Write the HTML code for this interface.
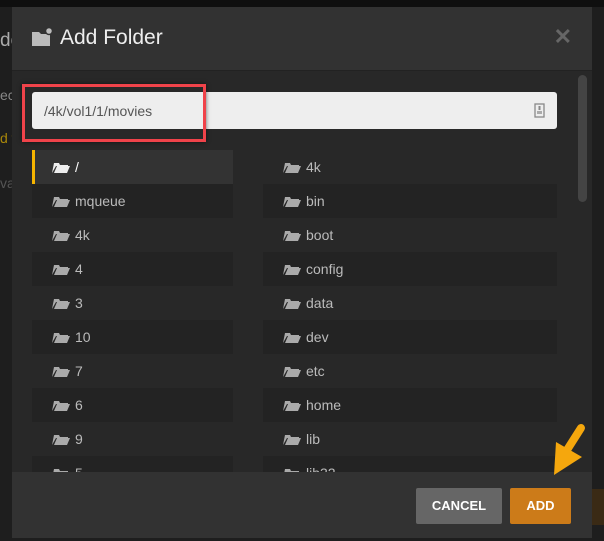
<!DOCTYPE html>
<html><head><meta charset="utf-8"><style>
*{box-sizing:border-box;margin:0;padding:0}
body{width:604px;height:541px;background:#1e1e1e;font-family:"Liberation Sans",sans-serif;position:relative;overflow:hidden}
.top{position:absolute;left:0;top:0;width:604px;height:7px;background:#0f0f0f}
.bgt{position:absolute;color:#888;font-size:15px}
.modal{position:absolute;left:12px;top:7px;width:580px;height:531px;background:#282828;overflow:hidden}
.hdr{position:absolute;left:0;top:0;width:580px;height:64px;background:#323232;border-bottom:1px solid #222}
.hdr h1{position:absolute;left:48px;top:19px;font-size:21px;font-weight:normal;color:#eee}
.close{position:absolute;right:20px;top:17px;color:#666;font-size:22px;font-weight:bold}
.inp{position:absolute;left:20px;top:85px;width:525px;height:37px;background:#eee;border-radius:3px;color:#555;font-size:14px;padding:11px 12px}
.red{position:absolute;left:10px;top:77px;width:184px;height:58px;border:3px solid #f0434a;box-shadow:0 0 4px rgba(0,0,0,.6)}
.row{position:absolute;height:34px;font-size:14px;color:#bbb;padding:9px 0 0 43px}
.row svg{position:absolute;left:19px;top:11px}
.sb{position:absolute;left:566px;top:68px;width:9px;height:127px;background:#444;border-radius:5px}
.ftr{position:absolute;left:0;top:465px;width:580px;height:66px;background:#323232}
.btn{position:absolute;top:16px;height:36px;color:#fff;font-weight:bold;font-size:13px;text-align:center;line-height:36px;border-radius:2px}
</style></head><body>
<div class="top"></div>
<div class="bgt" style="left:0;top:30px;font-size:19px;color:#aaa">de</div>
<div class="bgt" style="left:0;top:87px;font-size:14px">ec</div>
<div class="bgt" style="left:0;top:130px;font-size:14px;color:#a8870a">d f</div>
<div class="bgt" style="left:0;top:175px;font-size:14px;color:#555">va</div>
<div style="position:absolute;left:592px;top:489px;width:12px;height:36px;background:#3a2a15"></div>
<div class="modal">
<div class="hdr">
<svg style="position:absolute;left:20px;top:20px" width="22" height="20" viewBox="0 0 22 20"><path d="M0 5h7l2 2h9v12H0z" fill="#bbb"/><circle cx="17" cy="4" r="3.5" fill="#bbb" stroke="#323232" stroke-width="1.5"/></svg>
<h1>Add Folder</h1><div class="close">✕</div></div>
<div class="inp">/4k/vol1/1/movies
<svg style="position:absolute;right:12px;top:11px" width="11" height="15" viewBox="0 0 11 15"><rect x="1" y="1" width="9" height="13" fill="none" stroke="#888" stroke-width="1.3"/><rect x="4.5" y="3" width="2" height="4" fill="#888"/><rect x="3" y="8" width="5" height="3" fill="#aaa"/></svg></div>
<div class="red"></div>
<div class="sb"></div>
<div id="rows"></div>
<div class="ftr">
<div class="btn" style="left:404px;width:86px;background:#666">CANCEL</div>
<div class="btn" style="left:498px;width:61px;background:#cc7b19">ADD</div>
</div>
</div>
<svg style="position:absolute;left:0;top:0" width="604" height="541" viewBox="0 0 604 541"><line x1="581" y1="428" x2="567" y2="450" stroke="#f5a70d" stroke-width="8" stroke-linecap="round"/><path d="M556 442 L582 457 L554 475 Z" fill="#f5a70d"/></svg>
<script>
var L=["/","mqueue","4k","4","3","10","7","6","9","5"],R=["4k","bin","boot","config","data","dev","etc","home","lib","lib32"];
var h="";
function ic(c){return '<svg width="19" height="13" viewBox="0 0 19 13"><path d="M1 12L3 2h5l1 2h8v1H5z" fill="'+c+'"/><path d="M3 12L6 5h13l-3 7z" fill="'+c+'"/></svg>'}
for(var i=0;i<10;i++){var y=143+i*34;
var bg=i==0?"#333":(i%2?"#232323":"transparent");
h+='<div class="row" style="left:20px;width:201px;top:'+y+'px;background:'+bg+';'+(i==0?'color:#fff;border-left:3px solid #f5b400;padding-left:40px':'')+'">'+ic(i==0?"#eee":"#aaa").replace('<svg','<svg style="left:'+(i==0?16:19)+'px"')+L[i]+'</div>';
h+='<div class="row" style="left:251px;width:294px;top:'+y+'px;background:'+(i%2?"#232323":"transparent")+'">'+ic("#aaa")+R[i]+'</div>';}
document.getElementById("rows").innerHTML=h;
</script>
</body></html>
